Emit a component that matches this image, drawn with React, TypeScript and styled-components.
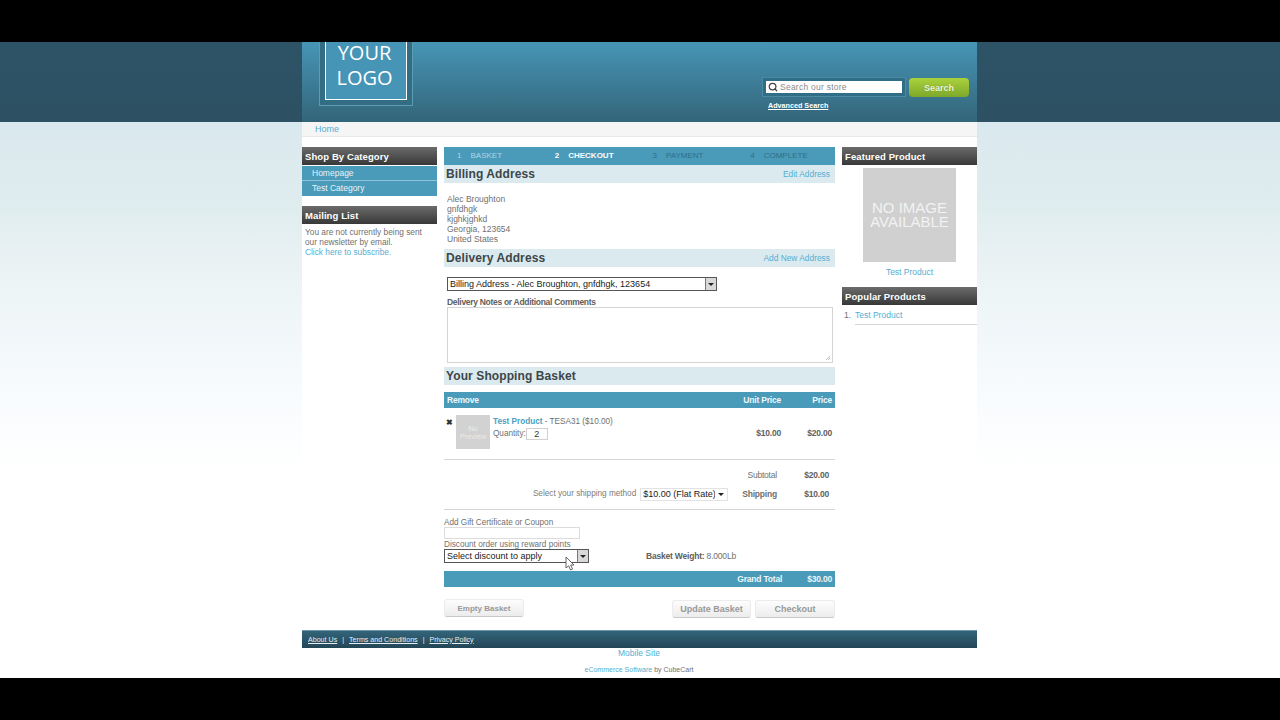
import React from 'react'
import styled, { createGlobalStyle } from 'styled-components'
import { Search as SearchIcon } from 'lucide-react'

const GlobalStyle = createGlobalStyle`
  html, body {
    margin: 0;
    padding: 0;
    background: #000;
    height: 100%;
    overflow: hidden;
  }
  * { box-sizing: border-box; }
  body {
    font-family: "Liberation Sans", Arial, sans-serif;
    font-size: 9px;
    color: #707070;
  }
`

const Stage = styled.div`
  margin-top: 42px;
  height: 636px;
  overflow: hidden;
  background:
    linear-gradient(#2d5366 0, #2d5163 80px, #d9e9ef 80px, #dce9ee 101px, #e0edef 168px, #e9f1f3 215px, #eff6f8 268px, #f8fbfe 351px, #fff 430px);
`

const Wrap = styled.div`
  width: 675px;
  height: 100%;
  margin: 0 0 0 302px;
  background: #fff;
  display: flex;
  flex-direction: column;
`

const Header = styled.header`
  height: 80px;
  flex: none;
  display: flex;
  justify-content: space-between;
  overflow: hidden;
  padding: 0 8px 0 17px;
  background: linear-gradient(#4795b6, #336579);
`

const LogoFrame = styled.div`
  align-self: flex-end;
  flex: none;
  width: 94px;
  height: 90px;
  margin-bottom: 16px;
  padding: 5px;
  border: 1px solid #5a9db5;
  background: #336d84;
`

const LogoBox = styled.div`
  height: 100%;
  border: 1px solid #fff;
  background: #4795b6;
  display: flex;
  flex-direction: column;
  justify-content: flex-end;
  align-items: center;
  gap: 3px;
  padding: 0 3px 10px 0;
  color: #fff;
  font-family: "Open Sans", sans-serif;
  font-size: 20px;
  line-height: 22px;
`

const SearchBlock = styled.div`
  padding-top: 35px;
`

const SearchRow = styled.form`
  display: flex;
  align-items: flex-start;
  gap: 3px;
  margin: 0;
`

const SearchFrame = styled.div`
  width: 144px;
  height: 20px;
  padding: 3px;
  border: 1px solid #4a8aa2;
  background: #2f6e86;
`

const SearchField = styled.div`
  height: 12px;
  background: #fff;
  display: flex;
  align-items: center;
  gap: 2px;
  padding-left: 2px;
  color: #8b8b8b;
  font-size: 8.5px;
  letter-spacing: 0.25px;
`

const SearchButton = styled.button`
  width: 60px;
  height: 19px;
  margin-top: 1px;
  padding: 0;
  border: 0;
  border-radius: 4px;
  background: linear-gradient(#abd23c, #7da82a);
  color: #eef5d8;
  font: bold 9px "Liberation Sans", Arial, sans-serif;
  text-shadow: 0 0 1px #6b8c20;
`

const AdvancedLink = styled.a`
  display: block;
  margin: 4px 0 0 6px;
  color: #fff;
  font-size: 7.2px;
  font-weight: bold;
  text-decoration: underline;
`

const Breadcrumb = styled.nav`
  height: 15px;
  flex: none;
  padding-left: 13px;
  background: #f5f5f5;
  border-bottom: 1px solid #e9e9e9;
  line-height: 14px;
  font-size: 9px;
`

const Link = styled.a`
  color: #55aed2;
`

const Columns = styled.div`
  flex: 1;
  display: grid;
  grid-template-columns: 135px 391px 135px;
  column-gap: 7px;
  padding-top: 10px;
`

const Side = styled.aside``

const BoxTitle = styled.h3<{ $gap?: number }>`
  margin: ${p => p.$gap ?? 0}px 0 0;
  height: 18px;
  padding-left: 3px;
  background: linear-gradient(#6b6b6b, #383838);
  color: #fff;
  font-size: 9.5px;
  font-weight: bold;
  line-height: 19px;
  letter-spacing: 0.1px;
`

const CategoryList = styled.ul`
  list-style: none;
  margin: 1px 0 0;
  padding: 0;
`

const CategoryItem = styled.li`
  height: 15px;
  padding-left: 10px;
  background: #4a9aba;
  border-bottom: 1px solid #8fc4d8;
  color: #e8f4f8;
  font-size: 8.5px;
  line-height: 14px;

  &:last-child {
    border-bottom: 0;
  }
`

const MailingText = styled.p`
  margin: 3px 0 0 3px;
  padding-right: 12px;
  font-size: 8.3px;
  line-height: 10px;
`

const Steps = styled.ol`
  display: flex;
  list-style: none;
  margin: 0;
  padding: 0;
  height: 18px;
  background: #4a9aba;
`

const Step = styled.li<{ $state: 'done' | 'active' | 'todo' }>`
  width: 98px;
  padding-left: 13px;
  display: flex;
  gap: 9px;
  font-size: 8px;
  line-height: 18px;
  font-weight: ${p => (p.$state === 'active' ? 'bold' : 'normal')};
  color: ${p => (p.$state === 'active' ? '#fff' : p.$state === 'done' ? '#b3d6e3' : '#2f7088')};
`

const SectionHead = styled.div<{ $gap?: number }>`
  margin-top: ${p => p.$gap ?? 0}px;
  height: 18px;
  padding: 0 5px 0 2px;
  background: #dbeaef;
  display: flex;
  justify-content: space-between;
  align-items: center;
`

const SectionTitle = styled.h2`
  margin: 0;
  color: #3d4649;
  font-size: 12px;
  font-weight: bold;
  letter-spacing: 0.1px;
`

const SectionLink = styled.a`
  color: #55aed2;
  font-size: 8.4px;
`

const Address = styled.address`
  margin: 11px 0 0 3px;
  font-style: normal;
  font-size: 8.5px;
  line-height: 10px;
`

const SelectShell = styled.div<{ $width: number; $left?: number; $top?: number }>`
  width: ${p => p.$width}px;
  height: 14px;
  margin: ${p => p.$top ?? 0}px 0 0 ${p => p.$left ?? 0}px;
  border: 1px solid #555;
  background: #fff;
  display: flex;
  align-items: stretch;
`

const NativeSelect = styled.select`
  flex: 1;
  min-width: 0;
  appearance: none;
  border: 0;
  outline: 0;
  background: transparent;
  padding: 0 0 0 2px;
  color: #222;
  font: 9px "Liberation Sans", Arial, sans-serif;
`

const SelectArrow = styled.span`
  flex: none;
  width: 11px;
  background: #d8d8d8;
  border-left: 1px solid #777;
  display: flex;
  align-items: center;
  justify-content: center;

  &::after {
    content: "";
    border: 3px solid transparent;
    border-top: 3px solid #222;
    border-bottom: 0;
  }
`

const NotesLabel = styled.label`
  display: block;
  margin: 6px 0 0 3px;
  color: #606060;
  font-size: 8.5px;
  font-weight: bold;
  letter-spacing: -0.3px;
  line-height: 10px;
`

const NotesBox = styled.div`
  position: relative;
  width: 386px;
  height: 56px;
  margin-left: 3px;
`

const Notes = styled.textarea`
  display: block;
  width: 100%;
  height: 100%;
  border: 1px solid #d4d4d4;
  background: #fff;
  outline: 0;
  resize: none;
`

const NotesGrip = styled.svg`
  position: absolute;
  right: 2px;
  bottom: 2px;
  width: 6px;
  height: 6px;
`

const BasketGrid = styled.div`
  display: grid;
  grid-template-columns: 1fr 60px 51px;
  padding-right: 3px;
  align-items: center;
`

const BasketHead = styled(BasketGrid)`
  margin-top: 7px;
  height: 16px;
  padding-left: 3px;
  background: #4a9aba;
  color: #eef7fa;
  font-size: 8.5px;
  font-weight: bold;
  letter-spacing: -0.2px;
`

const RightCell = styled.span`
  text-align: right;
`

const BasketRow = styled(BasketGrid)`
  height: 52px;
  padding-top: 7px;
  padding-left: 3px;
  align-items: start;
  border-bottom: 1px solid #d6d6d6;
`

const ProductCell = styled.div`
  display: flex;
  align-items: flex-start;
`

const RemoveMark = styled.span`
  width: 9px;
  margin-top: 3px;
  margin-left: -1px;
  padding-right: 1px;
  color: #333;
  font-size: 8px;
  font-weight: bold;
  line-height: 9px;
`

const Thumb = styled.div`
  width: 34px;
  height: 34px;
  margin-left: 1px;
  background: #d2d2d2;
  color: #eaeaea;
  font-size: 7.5px;
  line-height: 8px;
  text-align: center;
  padding-top: 10px;
  margin-right: 3px;
`

const ProductText = styled.div`
  padding-top: 1px;
  font-size: 8.2px;
  line-height: 12px;
`

const ProductLink = styled(Link)`
  font-weight: bold;
  color: #4b9fc0;
`

const QuantityRow = styled.div`
  display: flex;
  align-items: center;
`

const QuantityInput = styled.input`
  width: 22px;
  height: 12px;
  border: 1px solid #d0d0d0;
  padding: 0;
  background: #fff;
  color: #333;
  text-align: center;
  font: 9px "Liberation Sans", Arial, sans-serif;
`

const PriceCell = styled(RightCell)`
  font-size: 8.5px;
  font-weight: bold;
  letter-spacing: -0.2px;
  color: #606060;
  margin-top: 13px;
`

const Totals = styled.div`
  display: grid;
  grid-template-columns: 1fr 52px;
  grid-template-rows: 10px 10px;
  row-gap: 9px;
  padding: 10px 6px 0 0;
  height: 50px;
  border-bottom: 1px solid #d6d6d6;
  font-size: 8.5px;
  letter-spacing: -0.2px;
  line-height: 10px;
`

const TotalLabel = styled.div<{ $strong?: boolean }>`
  display: flex;
  justify-content: flex-end;
  align-items: center;
  gap: 2px;
  font-weight: ${p => (p.$strong ? 'bold' : 'normal')};
`

const ShippingHint = styled.span`
  margin-right: 2px;
  color: #7c7c7c;
  font-size: 8.2px;
  font-weight: normal;
  letter-spacing: 0;
`

const ShippingSelect = styled.div`
  flex: none;
  width: 88px;
  height: 13px;
  margin-right: 12px;
  border: 1px solid #e2e2e2;
  background: #fff;
  display: flex;
  align-items: center;
  letter-spacing: 0;
`

const ShippingArrow = styled.span`
  flex: none;
  width: 12px;
  display: flex;
  justify-content: center;

  &::after {
    content: "";
    border: 3px solid transparent;
    border-top: 3px solid #222;
    border-bottom: 0;
  }
`

const TotalValue = styled.div`
  text-align: right;
  font-weight: bold;
  color: #606060;
`

const Discounts = styled.div`
  position: relative;
  padding-top: 8px;
  display: grid;
  grid-template-columns: 202px 1fr;
  align-items: end;
`

const FieldLabel = styled.label`
  display: block;
  font-size: 8.2px;
  line-height: 9px;
`

const CouponInput = styled.input`
  display: block;
  width: 136px;
  height: 12px;
  margin-bottom: 1px;
  border: 1px solid #dcdcdc;
  background: #fff;
  padding: 0;
`

const Weight = styled.div`
  height: 14px;
  font-size: 8.5px;
  letter-spacing: -0.2px;
  line-height: 14px;
`

const WeightLabel = styled.b`
  color: #606060;
`

const Pointer = styled.svg`
  position: absolute;
  left: 121px;
  top: 46px;
  width: 11px;
  height: 15px;
`

const GrandTotal = styled.div`
  margin-top: 8px;
  height: 16px;
  padding-right: 3px;
  background: #4a9aba;
  color: #eef7fa;
  display: flex;
  justify-content: flex-end;
  align-items: center;
  gap: 25px;
  font-size: 8.5px;
  letter-spacing: -0.2px;
  font-weight: bold;
`

const Actions = styled.div`
  margin-top: 13px;
  display: flex;
  align-items: flex-start;
  gap: 4px;
`

const ActionButton = styled.button<{ $width: number; $push?: boolean; $lift?: boolean }>`
  width: ${p => p.$width}px;
  height: 18px;
  margin-left: ${p => (p.$push ? 'auto' : '0')};
  margin-top: ${p => (p.$lift ? '-1px' : '0')};
  padding: 0;
  border: 1px solid #ececec;
  border-bottom-color: #c8c8c8;
  border-radius: 3px;
  background: linear-gradient(#fdfdfd, #ececec);
  color: #999;
  font: bold ${p => (p.$lift ? '8px' : '9px')} "Liberation Sans", Arial, sans-serif;
`

const FeaturedImage = styled.div`
  width: 93px;
  height: 94px;
  margin: 3px auto 0;
  background: #d0d0d0;
  color: #f2f2f2;
  display: flex;
  align-items: center;
  justify-content: center;
  text-align: center;
  font-size: 15px;
  line-height: 14px;
`

const FeaturedName = styled(Link)`
  display: block;
  margin-top: 5px;
  text-align: center;
  font-size: 8.5px;
  line-height: 10px;
`

const PopularRow = styled.div`
  display: flex;
  height: 20px;
  margin-left: 2px;
  padding-top: 5px;
  font-size: 8.5px;
  line-height: 10px;
`

const PopularIndex = styled.span`
  width: 11px;
`

const PopularName = styled(Link)`
  flex: 1;
  border-bottom: 1px solid #d6d6d6;
`

const Footer = styled.footer`
  flex: none;
  height: 18px;
  margin-top: 12px;
  padding-left: 6px;
  display: flex;
  align-items: center;
  gap: 5px;
  border-top: 1px solid #6c97a7;
  background: linear-gradient(#33647a, #234656);
  color: #e6eef1;
  font-size: 7.1px;
`

const FooterLink = styled.a`
  color: #e6eef1;
  text-decoration: underline;
`

const Credits = styled.div`
  flex: none;
  height: 30px;
  text-align: center;
  margin-left: -1px;
`

const MobileLink = styled(Link)`
  display: block;
  font-size: 8.5px;
  line-height: 10px;
`

const Powered = styled.div`
  margin-top: 7px;
  font-size: 7px;
  line-height: 9px;
`

const App = () => (
  <>
    <GlobalStyle />
    <Stage>
      <Wrap>
        <Header>
          <LogoFrame>
            <LogoBox>
              <span>YOUR</span>
              <span>LOGO</span>
            </LogoBox>
          </LogoFrame>
          <SearchBlock>
            <SearchRow>
              <SearchFrame>
                <SearchField>
                  <SearchIcon size={10} color="#444" strokeWidth={3} />
                  Search our store
                </SearchField>
              </SearchFrame>
              <SearchButton type="button">Search</SearchButton>
            </SearchRow>
            <AdvancedLink>Advanced Search</AdvancedLink>
          </SearchBlock>
        </Header>
        <Breadcrumb>
          <Link>Home</Link>
        </Breadcrumb>
        <Columns>
          <Side>
            <BoxTitle>Shop By Category</BoxTitle>
            <CategoryList>
              <CategoryItem>Homepage</CategoryItem>
              <CategoryItem>Test Category</CategoryItem>
            </CategoryList>
            <BoxTitle $gap={10}>Mailing List</BoxTitle>
            <MailingText>
              You are not currently being sent our newsletter by email.
              <br />
              <Link>Click here to subscribe.</Link>
            </MailingText>
          </Side>
          <main>
            <Steps>
              <Step $state="done"><span>1</span><span>BASKET</span></Step>
              <Step $state="active"><span>2</span><span>CHECKOUT</span></Step>
              <Step $state="todo"><span>3</span><span>PAYMENT</span></Step>
              <Step $state="todo"><span>4</span><span>COMPLETE</span></Step>
            </Steps>
            <SectionHead>
              <SectionTitle>Billing Address</SectionTitle>
              <SectionLink>Edit Address</SectionLink>
            </SectionHead>
            <Address>
              Alec Broughton<br />
              gnfdhgk<br />
              kjghkjghkd<br />
              Georgia, 123654<br />
              United States
            </Address>
            <SectionHead $gap={5}>
              <SectionTitle>Delivery Address</SectionTitle>
              <SectionLink>Add New Address</SectionLink>
            </SectionHead>
            <SelectShell $width={270} $left={3} $top={10}>
              <NativeSelect>
                <option>Billing Address - Alec Broughton, gnfdhgk, 123654</option>
              </NativeSelect>
              <SelectArrow />
            </SelectShell>
            <NotesLabel>Delivery Notes or Additional Comments</NotesLabel>
            <NotesBox>
              <Notes />
              <NotesGrip viewBox="0 0 6 6">
                <path d="M5 1 L1 5 M5 3 L3 5" stroke="#bdbdbd" strokeWidth="1" />
              </NotesGrip>
            </NotesBox>
            <SectionHead $gap={4}>
              <SectionTitle>Your Shopping Basket</SectionTitle>
            </SectionHead>
            <BasketHead>
              <span>Remove</span>
              <RightCell>Unit Price</RightCell>
              <RightCell>Price</RightCell>
            </BasketHead>
            <BasketRow>
              <ProductCell>
                <RemoveMark>✖</RemoveMark>
                <Thumb>No Preview</Thumb>
                <ProductText>
                  <ProductLink>Test Product</ProductLink> - TESA31 ($10.00)
                  <QuantityRow>
                    Quantity:
                    <QuantityInput defaultValue="2" />
                  </QuantityRow>
                </ProductText>
              </ProductCell>
              <PriceCell>$10.00</PriceCell>
              <PriceCell>$20.00</PriceCell>
            </BasketRow>
            <Totals>
              <TotalLabel>Subtotal</TotalLabel>
              <TotalValue>$20.00</TotalValue>
              <TotalLabel $strong>
                <ShippingHint>Select your shipping method</ShippingHint>
                <ShippingSelect>
                  <NativeSelect>
                    <option>$10.00 (Flat Rate)</option>
                  </NativeSelect>
                  <ShippingArrow />
                </ShippingSelect>
                Shipping
              </TotalLabel>
              <TotalValue>$10.00</TotalValue>
            </Totals>
            <Discounts>
              <div>
                <FieldLabel>Add Gift Certificate or Coupon</FieldLabel>
                <CouponInput />
                <FieldLabel>Discount order using reward points</FieldLabel>
                <SelectShell $width={145}>
                  <NativeSelect>
                    <option>Select discount to apply</option>
                  </NativeSelect>
                  <SelectArrow />
                </SelectShell>
              </div>
              <Weight>
                <WeightLabel>Basket Weight:</WeightLabel> 8.000Lb
              </Weight>
              <Pointer viewBox="0 0 11 15">
                <path d="M1 1 L1 12 L3.6 9.8 L5.6 14 L7.6 13 L5.6 9 L9 9 Z" fill="#fff" stroke="#555" strokeWidth="0.9" />
              </Pointer>
            </Discounts>
            <GrandTotal>
              <span>Grand Total</span>
              <span>$30.00</span>
            </GrandTotal>
            <Actions>
              <ActionButton $width={80} $lift>Empty Basket</ActionButton>
              <ActionButton $width={79} $push>Update Basket</ActionButton>
              <ActionButton $width={80}>Checkout</ActionButton>
            </Actions>
          </main>
          <Side>
            <BoxTitle>Featured Product</BoxTitle>
            <FeaturedImage>NO IMAGE AVAILABLE</FeaturedImage>
            <FeaturedName>Test Product</FeaturedName>
            <BoxTitle $gap={10}>Popular Products</BoxTitle>
            <PopularRow>
              <PopularIndex>1.</PopularIndex>
              <PopularName>Test Product</PopularName>
            </PopularRow>
          </Side>
        </Columns>
        <Footer>
          <FooterLink>About Us</FooterLink>
          <span>|</span>
          <FooterLink>Terms and Conditions</FooterLink>
          <span>|</span>
          <FooterLink>Privacy Policy</FooterLink>
        </Footer>
        <Credits>
          <MobileLink>Mobile Site</MobileLink>
          <Powered>
            <Link>eCommerce Software</Link> by CubeCart
          </Powered>
        </Credits>
      </Wrap>
    </Stage>
  </>
)

export default App
